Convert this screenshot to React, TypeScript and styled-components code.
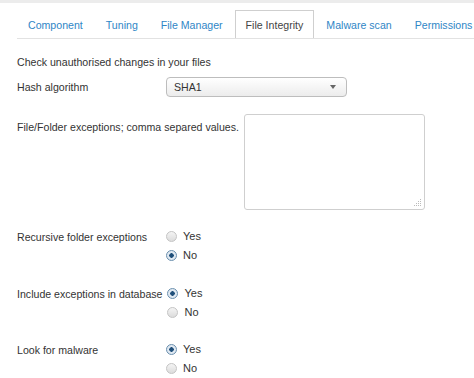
import React from "react";
import styled, { createGlobalStyle } from "styled-components";

const Global = createGlobalStyle`
  html, body {
    margin: 0;
    padding: 0;
    background: #fff;
  }
  body {
    font-family: "Liberation Sans", Arial, sans-serif;
    font-size: 10.6px;
    color: #333;
  }
`;

const Page = styled.div`
  border-top: 3px solid #ececec;
  padding-left: 17px;
`;

const Tabs = styled.ul`
  display: flex;
  list-style: none;
  margin: 0;
  padding: 7px 0 0 0;
  border-bottom: 1px solid #e2e2e2;
  height: 28px;
  white-space: nowrap;
  overflow: hidden;
`;

const Tab = styled.li<{ $active?: boolean }>`
  box-sizing: border-box;
  height: 29px;
  line-height: 29px;
  padding: 0 10px;
  margin-right: 1px;
  border: 1px solid ${(p) => (p.$active ? "#cfcfcf" : "transparent")};
  border-bottom-color: ${(p) => (p.$active ? "#fff" : "transparent")};
  background: #fff;
  color: ${(p) => (p.$active ? "#444" : "#2f86c6")};
  font-size: 10.6px;
`;

const Intro = styled.p`
  margin: 15px 0 7px;
  line-height: 16px;
`;

const Row = styled.div<{ $gap?: number }>`
  display: flex;
  align-items: flex-start;
  margin-top: ${(p) => p.$gap ?? 0}px;
`;

const Label = styled.div<{ $pad?: number }>`
  min-width: 144px;
  margin-right: 5px;
  line-height: 16px;
  padding-top: ${(p) => p.$pad ?? 0}px;
`;

const Select = styled.div`
  box-sizing: border-box;
  width: 181px;
  height: 20px;
  border: 1px solid #bdbdbd;
  border-radius: 4px;
  background: linear-gradient(#ffffff, #ececec);
  display: flex;
  align-items: center;
  justify-content: space-between;
  padding: 0 10px 0 7px;
  font-size: 10.6px;
  color: #333;
`;

const Arrow = styled.span`
  width: 0;
  height: 0;
  border-left: 3px solid transparent;
  border-right: 3px solid transparent;
  border-top: 4px solid #666;
`;

const Area = styled.div`
  position: relative;
  box-sizing: border-box;
  width: 181px;
  height: 96px;
  border: 1px solid #cfcfcf;
  border-radius: 3px;
  background: #fff;
`;

const Grip = styled.svg`
  position: absolute;
  right: 2px;
  bottom: 2px;
`;

const Group = styled.div`
  display: flex;
  flex-direction: column;
`;

const Option = styled.div`
  display: flex;
  align-items: center;
  height: 19px;
  line-height: 19px;
`;

const Radio = styled.span<{ $on?: boolean }>`
  box-sizing: border-box;
  width: 11px;
  height: 11px;
  border-radius: 50%;
  margin-right: 6px;
  border: 1px solid ${(p) => (p.$on ? "#6a8fae" : "#c4c4c4")};
  background: ${(p) =>
    p.$on
      ? "radial-gradient(circle, #1f4f7a 0 2px, #dfe8f1 2.5px)"
      : "linear-gradient(#f4f4f4, #dcdcdc)"};
`;

const OptText = styled.span`
  font-size: 11px;
`;

const tabs = ["Component", "Tuning", "File Manager", "File Integrity", "Malware scan", "Permissions"];

const YesNo = ({ yes }: { yes: boolean }) => (
  <Group>
    <Option>
      <Radio $on={yes} />
      <OptText>Yes</OptText>
    </Option>
    <Option>
      <Radio $on={!yes} />
      <OptText>No</OptText>
    </Option>
  </Group>
);

export default function App() {
  return (
    <Page>
      <Global />
      <Tabs>
        {tabs.map((t) => (
          <Tab key={t} $active={t === "File Integrity"}>
            {t}
          </Tab>
        ))}
      </Tabs>
      <Intro>Check unauthorised changes in your files</Intro>
      <Row>
        <Label $pad={2}>Hash algorithm</Label>
        <Select>
          SHA1
          <Arrow />
        </Select>
      </Row>
      <Row $gap={17}>
        <Label $pad={5}>File/Folder exceptions; comma separed values.</Label>
        <Area>
          <Grip width="9" height="9" viewBox="0 0 9 9">
            <g fill="#bbb">
              <rect x="7" y="1" width="1" height="1" />
              <rect x="5" y="3" width="1" height="1" />
              <rect x="7" y="3" width="1" height="1" />
              <rect x="3" y="5" width="1" height="1" />
              <rect x="5" y="5" width="1" height="1" />
              <rect x="7" y="5" width="1" height="1" />
              <rect x="1" y="7" width="1" height="1" />
              <rect x="3" y="7" width="1" height="1" />
              <rect x="5" y="7" width="1" height="1" />
              <rect x="7" y="7" width="1" height="1" />
            </g>
          </Grip>
        </Area>
      </Row>
      <Row $gap={17}>
        <Label $pad={2}>Recursive folder exceptions</Label>
        <YesNo yes={false} />
      </Row>
      <Row $gap={19}>
        <Label $pad={2}>Include exceptions in database</Label>
        <YesNo yes={true} />
      </Row>
      <Row $gap={18}>
        <Label $pad={2}>Look for malware</Label>
        <YesNo yes={true} />
      </Row>
    </Page>
  );
}
